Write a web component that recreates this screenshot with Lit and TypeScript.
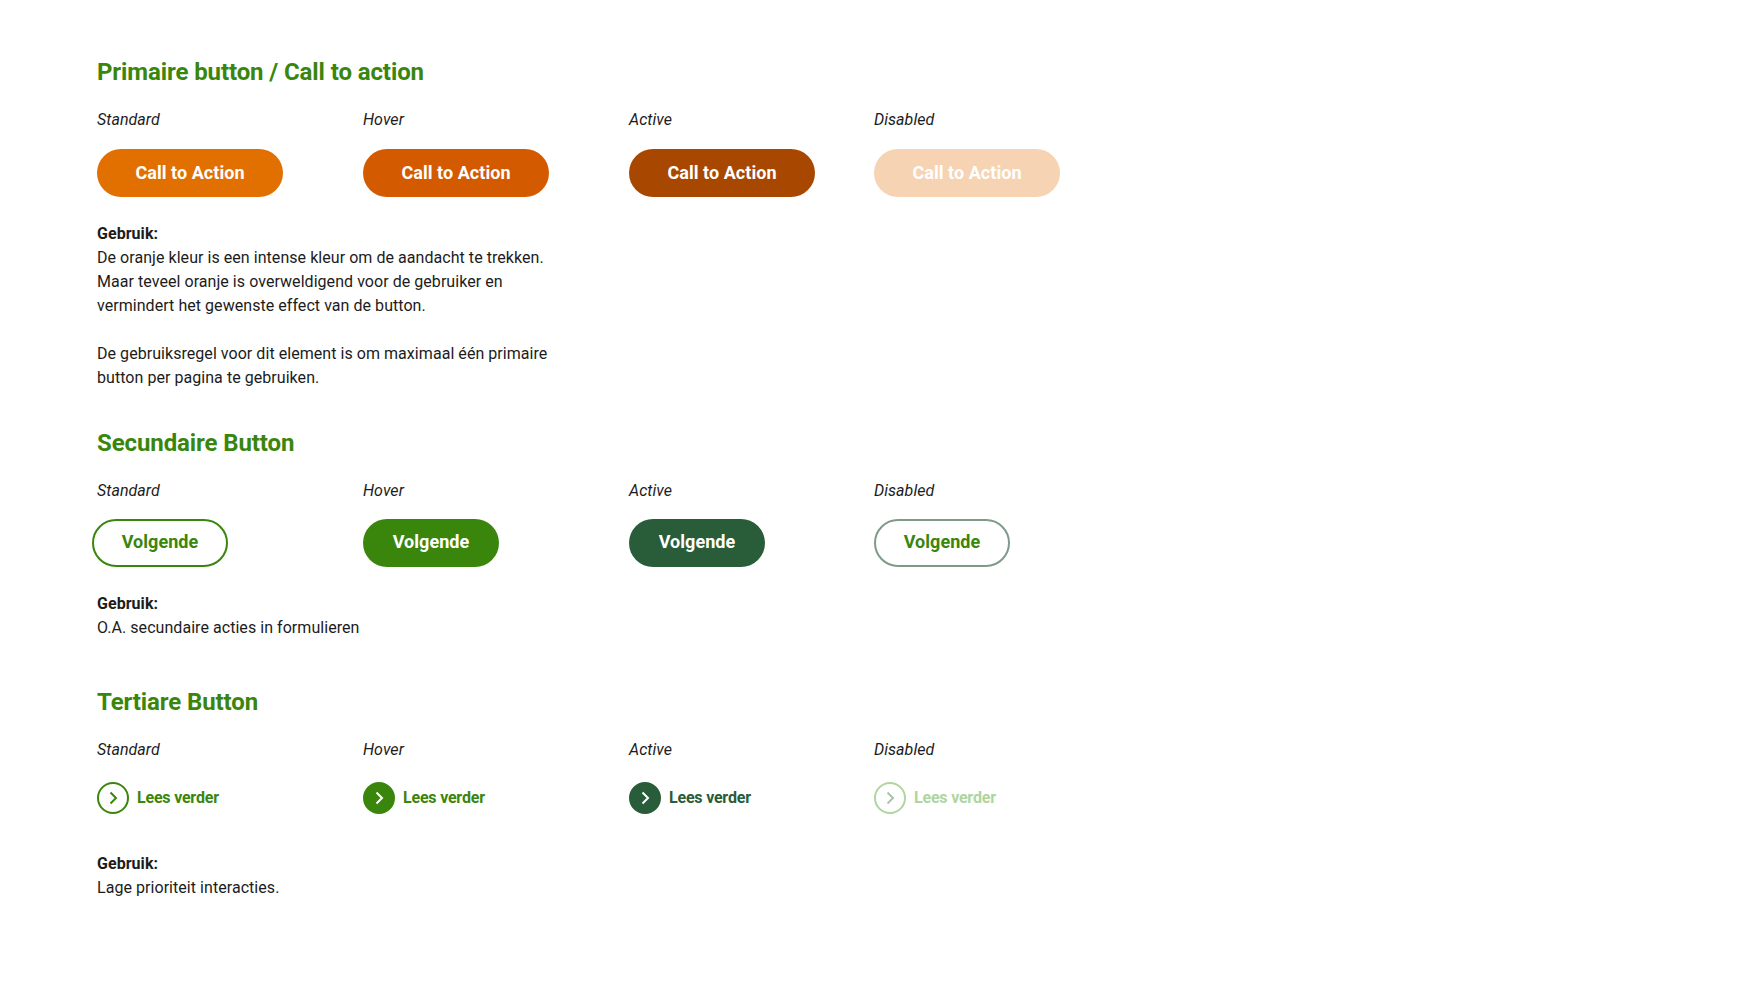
import { LitElement, html, css } from "lit";
import { customElement } from "lit/decorators.js";

const STATES = ["standard", "hover", "active", "disabled"] as const;
const LABELS = ["Standard", "Hover", "Active", "Disabled"];

@customElement("app-root")
export class AppRoot extends LitElement {
  static styles = css`
    :host { display: block; background: #fff; min-height: 988px; color: #1c1c1c; font-family: Roboto, "Open Sans", sans-serif; font-size: 16px; line-height: 24px; letter-spacing: 0.05px; }
    .page { padding: 56px 0 0 97px; }
    .first { margin-bottom: 37px; }
    .second { margin-bottom: 46px; }
    h2 { margin: 0 0 20px; height: 32px; font-size: 24px; line-height: 32px; font-weight: 700; color: #3a860d; letter-spacing: -0.1px; }
    .grid { display: grid; grid-template-columns: 266px 266px 245px 200px; }
    .label { font-style: italic; height: 24px; margin-bottom: 17px; }
    .second .label { margin-bottom: 16px; }
    .cta, .sec { display: flex; align-items: center; justify-content: center; height: 48px; box-sizing: border-box; border-radius: 24px; font-size: 18px; font-weight: 700; color: #fff; }
    .cta { width: 186px; }
    .cta.standard { background: #e27000; }
    .cta.hover { background: #d45a00; }
    .cta.active { background: #a84700; }
    .cta.disabled { background: #f6d3b3; }
    .sec { width: 136px; padding-bottom: 2px; }
    .sec.standard { background: #fff; color: #3a860d; border: 2px solid #3a860d; margin-left: -5px; }
    .sec.hover { background: #3a860d; }
    .sec.active { background: #295c38; }
    .sec.disabled { background: #fff; color: #3a860d; border: 2px solid #7d9b88; }
    .ter { display: flex; align-items: center; gap: 8px; height: 32px; font-weight: 700; font-size: 16px; color: #3a860d; letter-spacing: -0.2px; margin: 3px 0 13px; }
    .ter svg { width: 32px; height: 32px; display: block; }
    .ter.active { color: #295c38; }
    .ter.disabled { color: #b0d5a0; }
    .use { margin-top: 25px; }
    .use b { display: block; }
    .use p { margin: 0 0 24px; width: 470px; }
    .use p:last-child { margin-bottom: 0; }
  `;

  private icon(s: string) {
    const palette: Record<string, [string, string, string]> = {
      standard: ["#fff", "#3a860d", "#3a860d"],
      hover: ["#3a860d", "#3a860d", "#fff"],
      active: ["#295c38", "#295c38", "#fff"],
      disabled: ["#fff", "#b0d5a0", "#a9c4af"],
    };
    const [fill, ring, chev] = palette[s];
    return html`<svg viewBox="0 0 32 32" aria-hidden="true"><circle cx="16" cy="16" r="15" fill=${fill} stroke=${ring} stroke-width="2"></circle><path d="M13.5 10.5 19 16l-5.5 5.5" fill="none" stroke=${chev} stroke-width="2"></path></svg>`;
  }

  private labels() {
    return LABELS.map((l) => html`<div class="label">${l}</div>`);
  }

  render() {
    return html`<div class="page">
      <section class="first">
        <h2>Primaire button / Call to action</h2>
        <div class="grid">${this.labels()}${STATES.map((s) => html`<div class="cta ${s}">Call to Action</div>`)}</div>
        <div class="use"><b>Gebruik:</b>
          <p>De oranje kleur is een intense kleur om de aandacht te trekken.<br />Maar teveel oranje is overweldigend voor de gebruiker en<br />vermindert het gewenste effect van de button.</p>
          <p>De gebruiksregel voor dit element is om maximaal één primaire<br />button per pagina te gebruiken.</p>
        </div>
      </section>
      <section class="second">
        <h2>Secundaire Button</h2>
        <div class="grid">${this.labels()}${STATES.map((s) => html`<div class="sec ${s}">Volgende</div>`)}</div>
        <div class="use"><b>Gebruik:</b><p>O.A. secundaire acties in formulieren</p></div>
      </section>
      <section>
        <h2>Tertiare Button</h2>
        <div class="grid">${this.labels()}${STATES.map((s) => html`<div class="ter ${s}">${this.icon(s)}<span>Lees verder</span></div>`)}</div>
        <div class="use"><b>Gebruik:</b><p>Lage prioriteit interacties.</p></div>
      </section>
    </div>`;
  }
}
